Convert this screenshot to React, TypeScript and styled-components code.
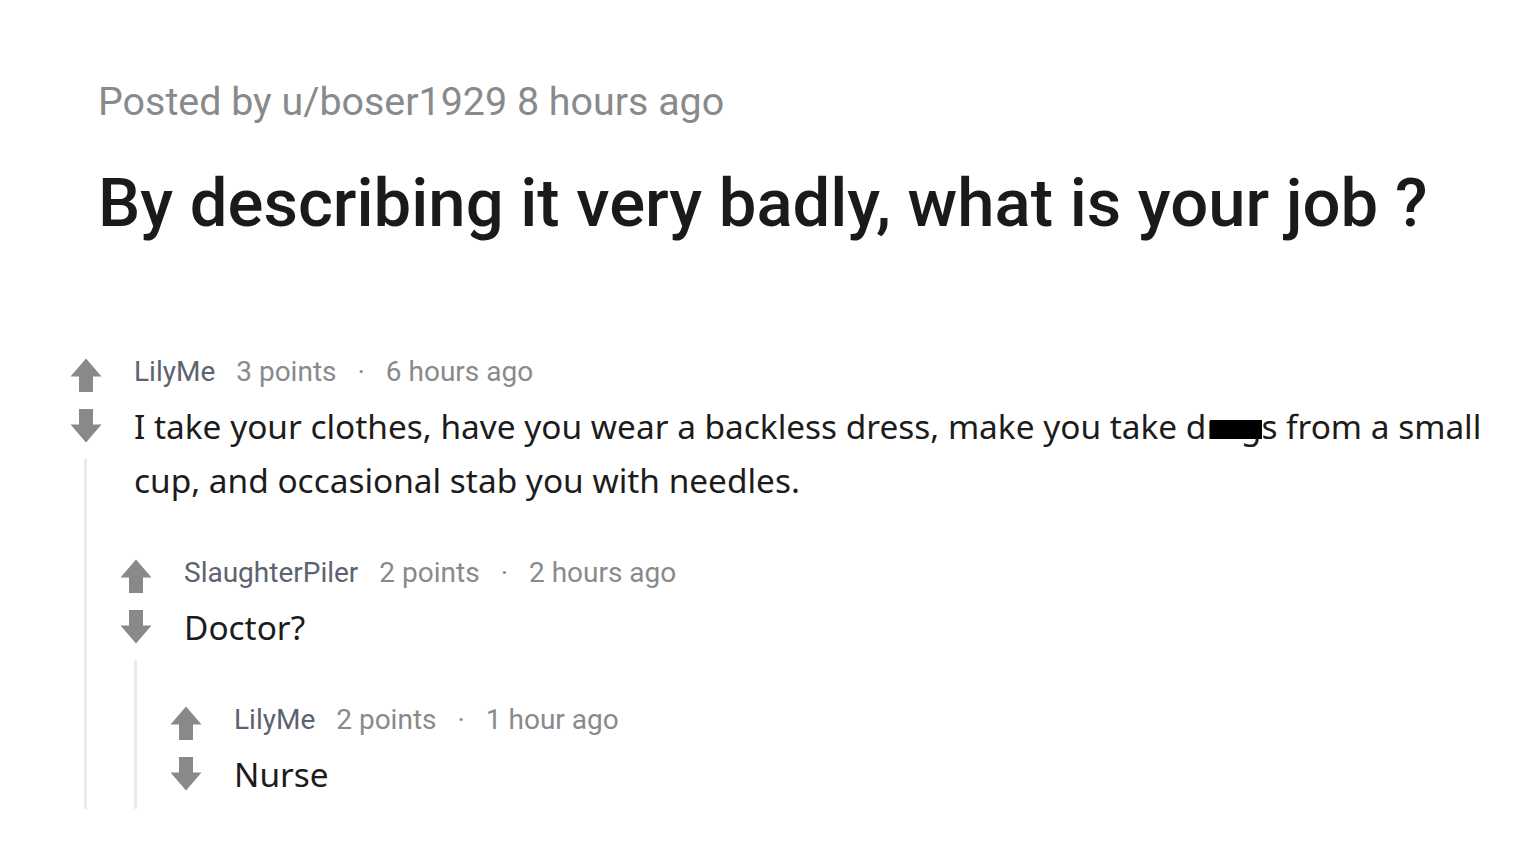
import React from "react";
import styled, { createGlobalStyle } from "styled-components";

const GlobalStyle = createGlobalStyle`
  html, body {
    margin: 0;
    padding: 0;
    background: #ffffff;
  }
  body {
    font-family: "Noto Sans", "Liberation Sans", sans-serif;
  }
`;

const Page = styled.div`
  width: 1536px;
  height: 864px;
  box-sizing: border-box;
  padding: 77px 36px 0 70px;
  background: #ffffff;
  overflow: hidden;
`;

const PostHeader = styled.header`
  display: flex;
  flex-direction: column;
  padding-left: 28px;
  margin-bottom: 108px;
`;

const PostedBy = styled.div`
  font-family: Roboto, "Liberation Sans", sans-serif;
  font-size: 39.4px;
  line-height: 50px;
  color: #888a8c;
`;

const Title = styled.h1`
  margin: 36px 0 0;
  font-family: Roboto, "Liberation Sans", sans-serif;
  font-weight: 500;
  font-size: 67px;
  line-height: 80px;
  color: #1a1a1b;
  letter-spacing: 0;
`;

const CommentBox = styled.div<{ $last?: boolean }>`
  display: flex;
  padding-bottom: ${(p) => (p.$last ? "8px" : "0")};
`;

const Gutter = styled.div`
  width: 50px;
  flex: none;
  display: flex;
  flex-direction: column;
`;

const VoteSlot = styled.div<{ $h: number; $pad?: number }>`
  width: 32px;
  height: ${(p) => p.$h}px;
  box-sizing: border-box;
  padding-top: ${(p) => p.$pad ?? 0}px;
  display: flex;
  align-items: center;
  justify-content: center;
`;

const ThreadLine = styled.div`
  flex: 1;
  width: 3px;
  margin: 6px 0 0 14px;
  background: #ebebeb;
`;

const Main = styled.div`
  flex: 1;
  min-width: 0;
  display: flex;
  flex-direction: column;
`;

const Content = styled.div`
  padding-left: 14px;
  display: flex;
  flex-direction: column;
  gap: 8px;
`;

const Meta = styled.div`
  height: 40px;
  display: flex;
  align-items: center;
  font-family: Roboto, "Liberation Sans", sans-serif;
  font-size: 28px;
  color: #888a8c;
  white-space: nowrap;
`;

const Author = styled.span`
  color: #5b6370;
  margin-right: 21px;
`;

const Dot = styled.span`
  margin: 0 21px;
`;

const Body = styled.p`
  margin: 0;
  font-family: "Noto Sans", "Liberation Sans", sans-serif;
  font-size: 33.4px;
  line-height: 54px;
  color: #1c1c1c;
  max-width: 1370px;
`;

const Redacted = styled.span`
  position: relative;
  &::after {
    content: "";
    position: absolute;
    left: 4px;
    right: -1px;
    top: 17px;
    height: 19px;
    background: #000;
  }
`;

const Replies = styled.div`
  padding-top: 45px;
  display: flex;
  flex-direction: column;
`;

const ArrowSvg = styled.svg`
  display: block;
  width: 32px;
  height: 34px;
  fill: #898989;
`;

const UpArrow = () => (
  <ArrowSvg viewBox="0 0 32 34">
    <path d="M16 0.5 L31.5 18.5 L23 18.5 L23 34 L9 34 L9 18.5 L0.5 18.5 Z" />
  </ArrowSvg>
);

const DownArrow = () => (
  <ArrowSvg viewBox="0 0 32 34">
    <path d="M9 0 L23 0 L23 15.5 L31.5 15.5 L16 33.5 L0.5 15.5 L9 15.5 Z" />
  </ArrowSvg>
);

type CommentProps = {
  author: string;
  points: string;
  time: string;
  children: React.ReactNode;
  replies?: React.ReactNode;
  last?: boolean;
};

const Comment = ({ author, points, time, children, replies, last }: CommentProps) => (
  <CommentBox $last={last}>
    <Gutter>
      <VoteSlot $h={44} $pad={4}>
        <UpArrow />
      </VoteSlot>
      <VoteSlot $h={58} $pad={4}>
        <DownArrow />
      </VoteSlot>
      {replies ? <ThreadLine /> : null}
    </Gutter>
    <Main>
      <Content>
        <Meta>
          <Author>{author}</Author>
          <span>{points}</span>
          <Dot>·</Dot>
          <span>{time}</span>
        </Meta>
        <Body>{children}</Body>
      </Content>
      {replies ? <Replies>{replies}</Replies> : null}
    </Main>
  </CommentBox>
);

export default function App() {
  return (
    <>
      <GlobalStyle />
      <Page>
        <PostHeader>
          <PostedBy>Posted by u/boser1929 8 hours ago</PostedBy>
          <Title>By describing it very badly, what is your job ?</Title>
        </PostHeader>
        <Comment
          author="LilyMe"
          points="3 points"
          time="6 hours ago"
          replies={
            <Comment
              author="SlaughterPiler"
              points="2 points"
              time="2 hours ago"
              replies={
                <Comment author="LilyMe" points="2 points" time="1 hour ago" last>
                  Nurse
                </Comment>
              }
            >
              Doctor?
            </Comment>
          }
        >
          I take your clothes, have you wear a backless dress, make you take d
          <Redacted>rug</Redacted>s from a small cup, and occasional stab you with needles.
        </Comment>
      </Page>
    </>
  );
}
